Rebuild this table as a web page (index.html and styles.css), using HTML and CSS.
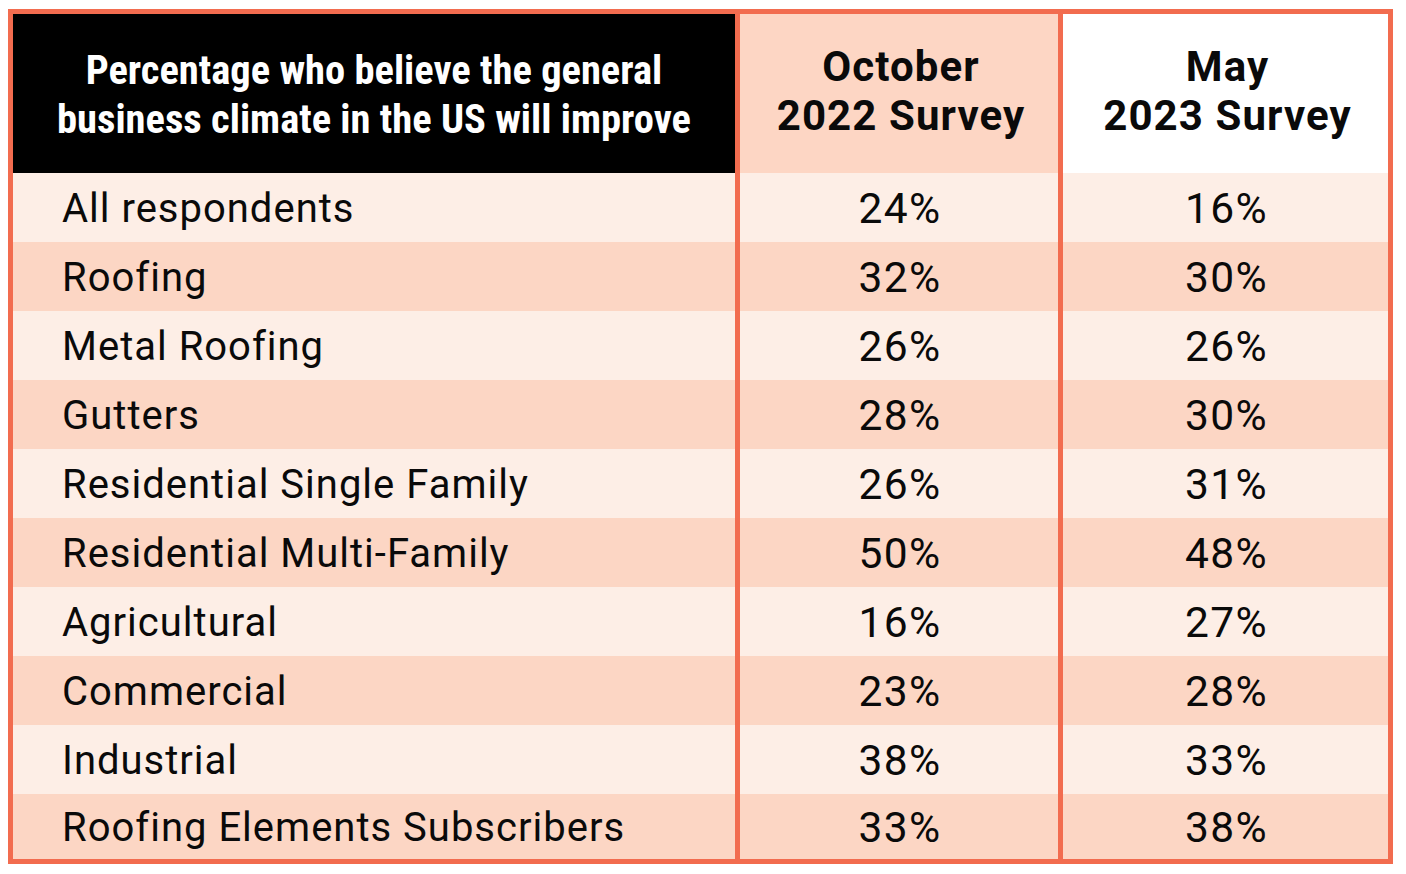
FILE: index.html
```html
<!DOCTYPE html>
<html lang="en">
<head>
<meta charset="utf-8">
<title>Business climate survey</title>
<link rel="stylesheet" href="styles.css">
</head>
<body>
<div class="table">
  <div class="cell head head-label"><div class="cond">Percentage who believe the general<br>business climate in the US will improve</div></div>
  <div class="cell head head-oct col2">October<br>2022 Survey</div>
  <div class="cell head head-may col3">May<br>2023 Survey</div>

  <div class="cell label light">All respondents</div><div class="cell num light col2">24%</div><div class="cell num light col3">16%</div>
  <div class="cell label dark">Roofing</div><div class="cell num dark col2">32%</div><div class="cell num dark col3">30%</div>
  <div class="cell label light">Metal Roofing</div><div class="cell num light col2">26%</div><div class="cell num light col3">26%</div>
  <div class="cell label dark">Gutters</div><div class="cell num dark col2">28%</div><div class="cell num dark col3">30%</div>
  <div class="cell label light">Residential Single Family</div><div class="cell num light col2">26%</div><div class="cell num light col3">31%</div>
  <div class="cell label dark">Residential Multi-Family</div><div class="cell num dark col2">50%</div><div class="cell num dark col3">48%</div>
  <div class="cell label light">Agricultural</div><div class="cell num light col2">16%</div><div class="cell num light col3">27%</div>
  <div class="cell label dark">Commercial</div><div class="cell num dark col2">23%</div><div class="cell num dark col3">28%</div>
  <div class="cell label light">Industrial</div><div class="cell num light col2">38%</div><div class="cell num light col3">33%</div>
  <div class="cell label dark">Roofing Elements Subscribers</div><div class="cell num dark col2">33%</div><div class="cell num dark col3">38%</div>
</div>
</body>
</html>
```
FILE: styles.css
```css
html, body {
  margin: 0;
  padding: 0;
  background: #ffffff;
}

body {
  padding: 9px 0 0 8px;
  font-family: Roboto, "Liberation Sans", sans-serif;
  color: #0a0a0a;
}

.table {
  box-sizing: border-box;
  width: 1385px;
  height: 855px;
  border: 5px solid #f26c4f;
  display: grid;
  grid-template-columns: 722px 323px 330px;
  grid-template-rows: 159px repeat(9, 69px) 65px;
}

.cell {
  display: flex;
  align-items: center;
  box-sizing: border-box;
  min-width: 0;
}

.col2, .col3 {
  border-left: 5px solid #f26c4f;
  justify-content: center;
  text-align: center;
}

.head {
  font-weight: 700;
  font-size: 42px;
  line-height: 49px;
  letter-spacing: 1.1px;
  padding-bottom: 5px;
  padding-left: 4px;
}

.head-label {
  background: #000000;
  color: #ffffff;
  justify-content: center;
  letter-spacing: 0;
  padding-bottom: 0;
  padding-left: 0;
}

.cond {
  font-family: "Roboto Condensed", Roboto, sans-serif;
  font-weight: 700;
  font-size: 40.5px;
  line-height: 49px;
  text-align: center;
  white-space: nowrap;
  padding-top: 2px;
}

.head-oct {
  background: #fdd6c4;
}

.head-may {
  background: #ffffff;
}

.label {
  padding-left: 49px;
  font-size: 40px;
  letter-spacing: 1px;
  padding-top: 2px;
}

.num {
  font-size: 42.5px;
  letter-spacing: 1.4px;
  padding-left: 2px;
  padding-top: 2px;
}

.light {
  background: #fdeee6;
}

.dark {
  background: #fcd6c4;
}
```
